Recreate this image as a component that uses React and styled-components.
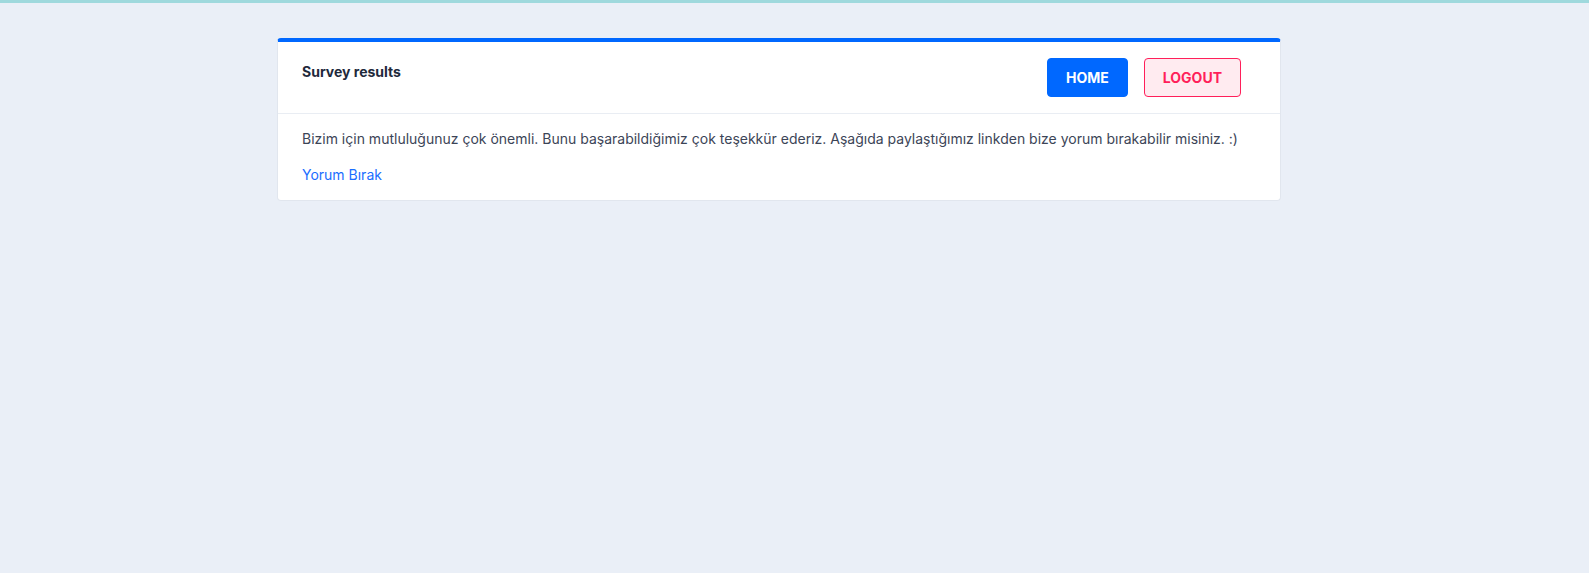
import React from "react";
import styled, { createGlobalStyle } from "styled-components";

const Global = createGlobalStyle`
  html, body { margin: 0; padding: 0; }
  body {
    background: #eaeff7;
    font-family: Inter, "Liberation Sans", Arial, sans-serif;
    overflow: hidden;
  }
`;

const Page = styled.div`
  height: 573px;
  box-sizing: border-box;
  border-top: 3px solid #9fd9dd;
  padding: 35px 31px 0 0;
  display: flex;
  justify-content: center;
  align-items: flex-start;
`;

const Card = styled.div`
  width: 1004px;
  flex-shrink: 0;
  background: #fff;
  border: 1px solid #e1e6ee;
  border-top: 4px solid #0068ff;
  border-radius: 4px;
  box-sizing: border-box;
`;

const Header = styled.div`
  display: flex;
  justify-content: space-between;
  align-items: flex-start;
  padding: 16px 39px 16px 24px;
  border-bottom: 1px solid #e9edf3;
  height: 72px;
  box-sizing: border-box;
`;

const Title = styled.h3`
  margin: 4px 0 0;
  font-size: 14px;
  line-height: 20px;
  font-weight: 700;
  color: #1e293b;
`;

const Actions = styled.div`
  display: flex;
  gap: 16px;
`;

const Button = styled.button`
  height: 39px;
  padding: 0 18px;
  min-width: ${(p) => (p.$variant === "danger" ? "96px" : "79px")};
  border-radius: 4px;
  font-family: Inter, "Liberation Sans", Arial, sans-serif;
  font-size: 14px;
  font-weight: 700;
  cursor: pointer;
  box-sizing: border-box;
  background: ${(p) => (p.$variant === "danger" ? "#ffebf0" : "#0068ff")};
  color: ${(p) => (p.$variant === "danger" ? "#ff1f5a" : "#fff")};
  border: 1px solid ${(p) => (p.$variant === "danger" ? "#ff1f5a" : "#0068ff")};
`;

const Body = styled.div`
  padding: 15px 24px 15px 24px;
`;

const Text = styled.p`
  margin: 0 0 15px;
  font-size: 14px;
  line-height: 20px;
  color: #3c4557;
`;

const Link = styled.a`
  display: inline-block;
  font-size: 14px;
  line-height: 20px;
  color: #1a6dff;
  text-decoration: none;
`;

export default function App() {
  return (
    <>
      <Global />
      <Page>
        <Card>
          <Header>
            <Title>Survey results</Title>
            <Actions>
              <Button>HOME</Button>
              <Button $variant="danger">LOGOUT</Button>
            </Actions>
          </Header>
          <Body>
            <Text>
              Bizim için mutluluğunuz çok önemli. Bunu başarabildiğimiz çok teşekkür ederiz. Aşağıda paylaştığımız linkden bize yorum bırakabilir misiniz. :)
            </Text>
            <Link href="#">Yorum Bırak</Link>
          </Body>
        </Card>
      </Page>
    </>
  );
}
